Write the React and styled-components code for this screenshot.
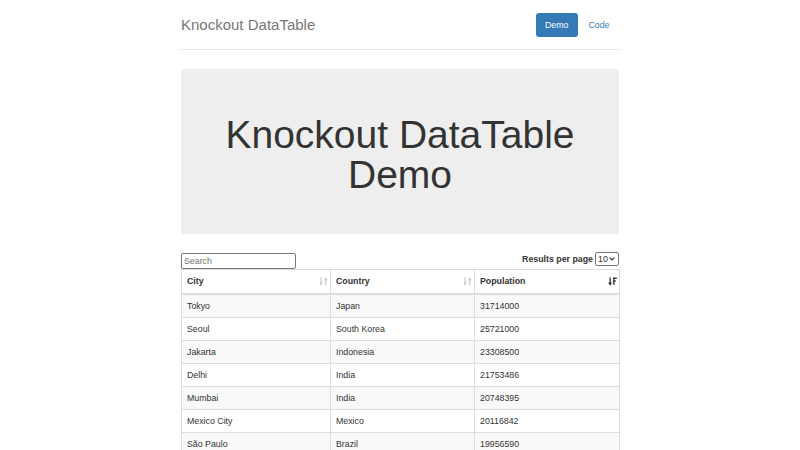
import React, {useMemo, useState} from 'react';
import styled, {createGlobalStyle} from "styled-components";

const cities = [
    {city: 'Tokyo', country: 'Japan', population: 31714000},
    {city: 'Seoul', country: 'South Korea', population: 25721000},
    {city: 'Jakarta', country: 'Indonesia', population: 23308500},
    {city: 'Delhi', country: 'India', population: 21753486},
    {city: 'Mumbai', country: 'India', population: 20748395},
    {city: 'Mexico City', country: 'Mexico', population: 20116842},
    {city: 'São Paulo', country: 'Brazil', population: 19956590},
    {city: 'New York City', country: 'United States', population: 19750000},
    {city: 'Shanghai', country: 'China', population: 18880000},
    {city: 'Manila', country: 'Philippines', population: 18820000},
];

const SortIcon = () => (
    <svg width="9" height="9" viewBox="0 0 9 9">
        <rect x="1.5" y="0.5" width="1.2" height="6" />
        <polygon points="0.2,5.8 4,5.8 2.1,8.6" />
        <rect x="6.2" y="2.4" width="1.2" height="6.1" />
        <polygon points="4.9,3.2 8.7,3.2 6.8,0.4" />
    </svg>
);

const SortDescIcon = () => (
    <svg width="9" height="9" viewBox="0 0 9 9">
        <rect x="1.5" y="0.5" width="1.3" height="6" />
        <polygon points="0.1,5.6 4.2,5.6 2.15,8.7" />
        <rect x="5.2" y="0.6" width="3.6" height="1.4" />
        <rect x="5.2" y="3.3" width="2.6" height="1.4" />
        <rect x="5.2" y="6" width="1.5" height="1.4" />
        <rect x="5.2" y="0.6" width="1.2" height="6.8" />
    </svg>
);

const Chevron = () => (
    <svg width="6" height="4" viewBox="0 0 6 4">
        <polyline points="0.6,0.6 3,3 5.4,0.6" fill="none" stroke="#333" strokeWidth="1.2" />
    </svg>
);

const columns = [
    {key: 'city', label: 'City', width: 149},
    {key: 'country', label: 'Country', width: 144},
    {key: 'population', label: 'Population', width: 145},
];

const App = () => {

    const [search, setSearch] = useState('');
    const [perPage, setPerPage] = useState('10');

    const rows = useMemo(()=> {
        const term = search.trim().toLowerCase();
        return cities
            .filter((row)=> !term || row.city.toLowerCase().includes(term) || row.country.toLowerCase().includes(term))
            .sort((a, b)=> b.population - a.population)
            .slice(0, Number(perPage));
    }, [search, perPage])

    return (
        <>
            <GlobalStyle />
            <Container>
                <Header>
                    <Brand>Knockout DataTable</Brand>
                    <Pills>
                        <Pill active>Demo</Pill>
                        <Pill>Code</Pill>
                    </Pills>
                </Header>

                <Jumbotron>
                    <h1>Knockout DataTable Demo</h1>
                </Jumbotron>

                <Toolbar>
                    <SearchInput placeholder="Search" value={search} onChange={(e)=> setSearch(e.target.value)} />
                    <PerPage>
                        <span>Results per page</span>
                        <SelectWrap>
                            <select value={perPage} onChange={(e)=> setPerPage(e.target.value)}>
                                <option>10</option>
                                <option>25</option>
                                <option>50</option>
                            </select>
                            <Chevron />
                        </SelectWrap>
                    </PerPage>
                </Toolbar>

                <Table>
                    <colgroup>
                        {columns.map((col)=> <col key={col.key} style={{width: col.width}} />)}
                    </colgroup>
                    <thead>
                        <tr>
                            {columns.map((col)=> (
                                <HeadCell key={col.key}>
                                    {col.label}
                                    <SortMark active={col.key === 'population'}>
                                        {col.key === 'population' ? <SortDescIcon /> : <SortIcon />}
                                    </SortMark>
                                </HeadCell>
                            ))}
                        </tr>
                    </thead>
                    <tbody>
                        {rows.map((row)=> (
                            <Row key={row.city}>
                                <Cell>{row.city}</Cell>
                                <Cell>{row.country}</Cell>
                                <Cell>{row.population}</Cell>
                            </Row>
                        ))}
                    </tbody>
                </Table>
            </Container>
        </>
    );
};

const GlobalStyle = createGlobalStyle`
    * {
        box-sizing: border-box;
    }

    body {
        margin: 0;
        background: #fff;
        color: #333;
        font-family: "Liberation Sans", Arial, sans-serif;
        font-size: 8.8px;
        line-height: 12px;
    }
`;

const Container = styled.div`
    width: 438px;
    margin: 0 auto;
    display: flex;
    flex-direction: column;
`;

const Header = styled.header`
    display: flex;
    align-items: center;
    justify-content: space-between;
    padding: 13px 0 12px;
    border-bottom: 1px solid #e5e5e5;
`;

const Brand = styled.h3`
    margin: 0;
    font-size: 15px;
    font-weight: 400;
    line-height: 18px;
    color: #777;
`;

const Pills = styled.nav`
    display: flex;
    gap: 1px;
`;

const Pill = styled.a`
    display: flex;
    align-items: center;
    height: 24px;
    padding: 0 9.5px;
    border-radius: 3px;
    font-size: 8.8px;
    cursor: pointer;
    color: ${({active}) => active ? '#fff' : '#337ab7'};
    background: ${({active}) => active ? '#337ab7' : 'transparent'};
`;

const Jumbotron = styled.section`
    margin-top: 19px;
    height: 165px;
    padding: 46px 30px 0;
    border-radius: 4px;
    background: #eee;
    text-align: center;

    & > h1 {
        margin: 0;
        font-size: 39px;
        font-weight: 400;
        line-height: 40px;
        color: #333;
    }
`;

const Toolbar = styled.div`
    margin-top: 19px;
    display: flex;
    align-items: flex-start;
    justify-content: space-between;
`;

const SearchInput = styled.input`
    width: 115px;
    height: 16px;
    padding: 0 2px;
    border: 1px solid #767676;
    border-radius: 2px;
    font-family: inherit;
    font-size: 8.8px;
    color: #333;
    outline: none;

    &::placeholder {
        color: #757575;
    }
`;

const PerPage = styled.label`
    display: flex;
    align-items: center;
    gap: 2px;
    margin-top: -1px;
    font-weight: 700;
`;

const SelectWrap = styled.span`
    position: relative;
    display: flex;

    & > select {
        appearance: none;
        width: 24px;
        height: 14px;
        padding: 0 0 0 2px;
        font-family: inherit;
        font-size: 8.8px;
        font-weight: 400;
        color: #333;
        border: 1px solid #767676;
        border-radius: 2px;
        background: #fff;
        outline: none;
    }

    & > svg {
        position: absolute;
        right: 4px;
        top: 5px;
        pointer-events: none;
    }
`;

const Table = styled.table`
    width: 438px;
    table-layout: fixed;
    border-collapse: collapse;
    border: 1px solid #ddd;
`;

const HeadCell = styled.th`
    position: relative;
    padding: 5px 5px 6px;
    text-align: left;
    font-weight: 700;
    line-height: 12px;
    border: 1px solid #ddd;
    border-bottom: 2px solid #ddd;
`;

const SortMark = styled.span`
    position: absolute;
    right: 2px;
    top: 7px;
    display: flex;
    fill: ${({active}) => active ? '#333' : '#c8c8c8'};
`;

const Row = styled.tr`
    &:nth-child(odd) {
        background: #f9f9f9;
    }
`;

const Cell = styled.td`
    padding: 5px;
    line-height: 12px;
    border: 1px solid #ddd;
    white-space: nowrap;
`;

export default App;
